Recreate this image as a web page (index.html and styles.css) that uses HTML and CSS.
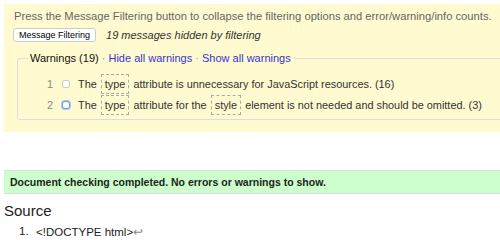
FILE: index.html
```html
<!DOCTYPE html>
<html lang="en">
<head>
    <meta charset="UTF-8">
    <title>Nu Html Checker</title>
    <link rel="stylesheet" href="styles.css">
</head>
<body>
    <div class="page">
        <div class="filters">
            <p class="hint">Press the Message Filtering button to collapse the filtering options and error/warning/info counts.</p>
            <div class="filter-bar">
                <button class="filter-btn">Message Filtering</button>
                <span class="hidden-count">19 messages hidden by filtering</span>
            </div>
            <fieldset class="group">
                <legend>Warnings (19) <span class="dot">·</span> <a href="#">Hide all warnings</a> <span class="dot">·</span> <a href="#">Show all warnings</a></legend>
                <ol class="msgs">
                    <li><span class="num">1</span><input type="checkbox"><span>The <code>type</code> attribute is unnecessary for JavaScript resources. (16)</span></li>
                    <li><span class="num">2</span><input type="checkbox" class="focus"><span>The <code>type</code> attribute for the <code>style</code> element is not needed and should be omitted. (3)</span></li>
                </ol>
            </fieldset>
        </div>

        <p class="success">Document checking completed. No errors or warnings to show.</p>

        <h2>Source</h2>
        <ol class="source">
            <li><span class="line-no">1.</span><span>&lt;!DOCTYPE html&gt;<span class="ret">↩</span></span></li>
        </ol>
    </div>
</body>
</html>
```

FILE: styles.css
```css
body {
    margin: 0;
    padding: 4px;
    font-family: "Liberation Sans", Arial, sans-serif;
    color: #222;
    overflow: hidden;
}
.page {
    width: 560px;
}
.filters {
    background-color: #fffad0;
    padding: 6px 6px 12px 6px;
}
.hint {
    margin: 0 0 0 4px;
    font-size: 11.2px;
    color: #666;
}
.filter-bar {
    display: flex;
    align-items: center;
    gap: 10px;
    margin-top: 6px;
}
.filter-btn {
    font-family: "Liberation Sans", Arial, sans-serif;
    font-size: 9px;
    background: #fff;
    border: 1px solid #ccc;
    border-radius: 3px;
    padding: 1px 5px;
    margin-left: 3px;
}
.hidden-count {
    font-size: 11px;
    font-style: italic;
    color: #333;
}
.group {
    margin: 10px 0 0 7px;
    border: 1px solid #ddd;
    border-radius: 3px;
    padding: 9px 10px 4px 29px;
}
.group legend {
    font-size: 11px;
    padding: 0 2px;
    margin-left: -19px;
    color: #111;
}
.group a {
    color: #3535d6;
    text-decoration: none;
}
.dot {
    color: #888;
}
.msgs {
    list-style: none;
    margin: 0;
    padding: 0;
    font-size: 10.9px;
    color: #333;
}
.msgs li {
    display: flex;
    align-items: center;
    height: 21px;
}
.num {
    color: #888;
    width: 9px;
}
.msgs input {
    appearance: none;
    width: 8px;
    height: 8px;
    margin: 0 8px 0 6px;
    border: 1px solid #ccc;
    border-radius: 2px;
    background: #fff;
}
.msgs input.focus {
    border-color: #6e9ad3;
    border-radius: 3px;
    box-shadow: 0 0 0 1px #a9c8ee;
}
code {
    font-family: "Liberation Sans", Arial, sans-serif;
    border: 1px dashed #aaa;
    padding: 3px 3px;
    margin: 0 1px;
}
.success {
    margin: 38px 0 0 0;
    background-color: #ccffcc;
    border-top: 1px solid #ddd;
    border-bottom: 1px solid #ddd;
    padding: 5px 6px;
    font-size: 10.5px;
    font-weight: bold;
}
h2 {
    font-size: 15px;
    font-weight: normal;
    margin: 8px 0 0 0;
}
.source {
    list-style: none;
    margin: 6px 0 0 0;
    padding-left: 15px;
    font-size: 11.5px;
}
.source li {
    display: flex;
}
.line-no {
    width: 17px;
}
.ret {
    color: #888;
}
```
